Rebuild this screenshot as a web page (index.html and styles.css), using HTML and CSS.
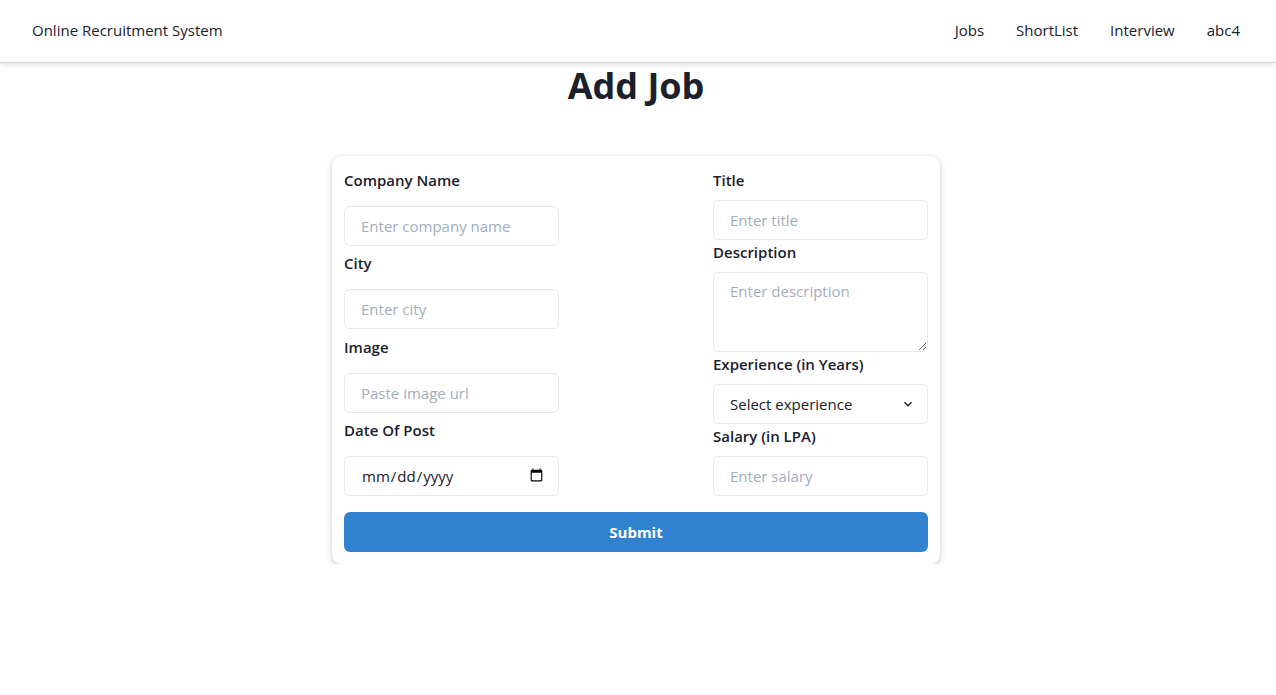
FILE: index.html
```html
<!DOCTYPE html>
<html lang="en">
<head>
<meta charset="utf-8">
<title>Add Job</title>
<link rel="stylesheet" href="styles.css">
</head>
<body>
<header class="topbar">
  <div class="brand">Online Recruitment System</div>
  <nav class="nav">
    <a href="#">Jobs</a>
    <a href="#">ShortList</a>
    <a href="#">Interview</a>
    <a href="#">abc4</a>
  </nav>
</header>
<main class="main">
  <h1 class="heading">Add Job</h1>
  <form class="card">
    <div class="cols">
      <div class="col col-left">
        <label class="label">Company Name</label>
        <input class="field" type="text" placeholder="Enter company name">
        <label class="label">City</label>
        <input class="field" type="text" placeholder="Enter city">
        <label class="label">Image</label>
        <input class="field" type="text" placeholder="Paste image url">
        <label class="label">Date Of Post</label>
        <input class="field date" type="date">
      </div>
      <div class="col col-right">
        <label class="label">Title</label>
        <input class="field" type="text" placeholder="Enter title">
        <label class="label">Description</label>
        <textarea class="field area" placeholder="Enter description"></textarea>
        <label class="label">Experience (in Years)</label>
        <div class="select-wrap">
          <select class="field select">
            <option>Select experience</option>
          </select>
          <svg class="chev" viewBox="0 0 24 24" width="16" height="16"><path fill="currentColor" d="M16.59 8.59L12 13.17 7.41 8.59 6 10l6 6 6-6z"/></svg>
        </div>
        <label class="label">Salary (in LPA)</label>
        <input class="field" type="text" placeholder="Enter salary">
      </div>
    </div>
    <button class="submit" type="button">Submit</button>
  </form>
</main>
</body>
</html>
```
FILE: styles.css
```css
* { box-sizing: border-box; }
html, body { margin: 0; padding: 0; background: #fff; }
body {
  font-family: "Open Sans", "Noto Sans", sans-serif;
  color: #1a202c;
  font-size: 16px;
  line-height: 1.5;
}
.topbar {
  height: 63px;
  display: flex;
  align-items: center;
  justify-content: space-between;
  padding: 0 36px 2px 32px;
  border-bottom: 1px solid #cbd5e0;
  box-shadow: 0 4px 6px -1px rgba(0,0,0,0.08), 0 2px 4px -1px rgba(0,0,0,0.04);
  font-size: 15px;
}
.brand { color: #1a202c; }
.nav { display: flex; gap: 32px; }
.nav a { color: #1a202c; text-decoration: none; }
.main {
  display: flex;
  flex-direction: column;
  align-items: center;
  padding-right: 4px;
}
.heading {
  margin: 1px 0 49px;
  font-size: 36px;
  line-height: 43px;
  font-weight: 700;
}
.card {
  width: 608px;
  padding: 12px;
  border-radius: 9px;
  box-shadow: 0 2px 6px rgba(0,0,0,0.2), 0 0 2px rgba(0,0,0,0.08);
  background: #fff;
}
.cols {
  display: flex;
  justify-content: space-between;
}
.col {
  width: 215px;
  display: flex;
  flex-direction: column;
}
.col-left { justify-content: space-between; }
.label {
  display: block;
  font-size: 15px;
  font-weight: 600;
  line-height: 24px;
  margin-bottom: 8px;
}
.field {
  width: 100%;
  height: 40px;
  border: 1px solid #e2e8f0;
  border-radius: 6px;
  padding: 0 16px;
  font-family: inherit;
  font-size: 15px;
  color: #1a202c;
  background: #fff;
  outline: none;
}
.field::placeholder { color: #a0aec0; }
.area {
  height: 80px;
  padding-top: 8px;
  line-height: 1.4;
  resize: vertical;
  display: block;
}
.date { padding-right: 12px; }
.select-wrap { position: relative; }
.select {
  appearance: none;
  -webkit-appearance: none;
  padding-right: 32px;
  display: block;
}
.chev {
  position: absolute;
  right: 12px;
  top: 12px;
  color: #1a202c;
  pointer-events: none;
}
.submit {
  display: block;
  width: 100%;
  height: 40px;
  margin-top: 16px;
  border: 0;
  border-radius: 6px;
  background: #3182ce;
  color: #fff;
  font-family: inherit;
  font-size: 15px;
  font-weight: 700;
}
```
